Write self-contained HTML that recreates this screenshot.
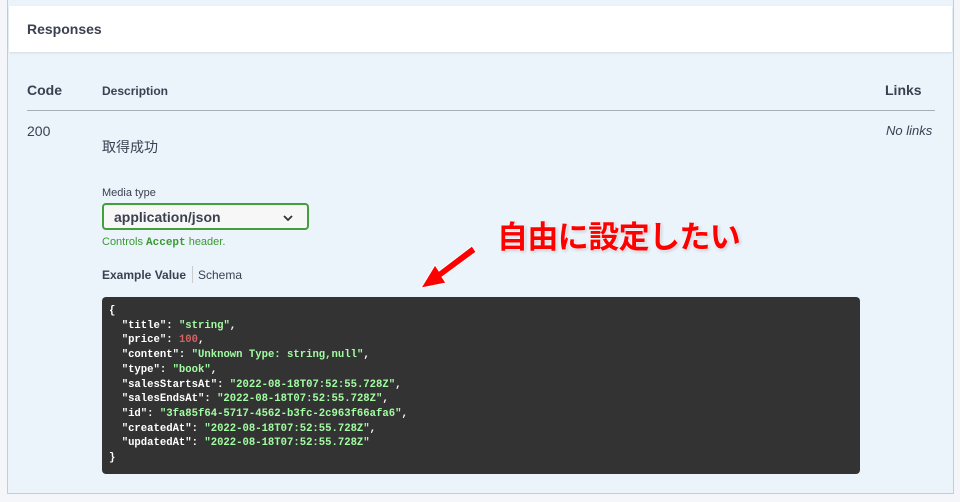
<!DOCTYPE html>
<html><head><meta charset="utf-8"><style>
*{margin:0;padding:0;box-sizing:border-box}
body{width:960px;height:502px;background:#f4f6f9;position:relative;overflow:hidden;font-family:"Liberation Sans","Noto Sans CJK JP",sans-serif;color:#3b4151}
.box{position:absolute;left:7px;top:0;width:947px;height:494px;background:#ebf3fb;border:1px solid #b4d0ee;border-top:none}
.hdr{position:absolute;left:9px;top:6px;width:943px;height:46px;background:#fff;box-shadow:0 1px 2px rgba(0,0,0,.1)}
.a{position:absolute;white-space:nowrap}
pre{position:absolute;left:102px;top:297px;width:758px;height:177px;background:#333;border-radius:4px;padding:7px 7px;font-family:"Liberation Mono",monospace;font-weight:bold;font-size:10.6px;line-height:14.7px;color:#fff}
.s{color:#a2fca2}.n{color:#d36363}
.big{font-size:31px;font-weight:bold;color:#f00;text-shadow:0 0 2px #fff,0 0 3px #fff,1px 1px 3px rgba(0,0,0,.3);letter-spacing:-0.6px;font-family:"Noto Sans CJK JP",sans-serif}
</style></head><body>
<div class="box"></div>
<div class="hdr"></div>
<div class="a" style="left:27px;top:21px;font-size:14px;font-weight:bold">Responses</div>
<div class="a" style="left:27px;top:82px;font-size:14px;font-weight:bold">Code</div>
<div class="a" style="left:102px;top:84px;font-size:12px;font-weight:bold">Description</div>
<div class="a" style="left:885px;top:82px;font-size:14px;font-weight:bold">Links</div>
<div class="a" style="left:27px;top:110px;width:908px;height:1px;background:#a9adb5"></div>
<div class="a" style="left:27px;top:123px;font-size:14px">200</div>
<div class="a" style="left:886px;top:123px;font-size:13px;font-style:italic">No links</div>
<div class="a" style="left:102px;top:137px;font-size:14px">取得成功</div>
<div class="a" style="left:102px;top:187px;font-size:11px">Media type</div>
<div class="a" style="left:102px;top:203px;width:207px;height:27px;border:2px solid #41a03a;border-radius:4px;background:#f7f7f7;font-size:14px;font-weight:bold;padding:4px 0 0 10px">application/json
<svg style="position:absolute;right:14px;top:10px" width="10" height="6" viewBox="0 0 10 6"><path d="M1 1l4 4 4-4" fill="none" stroke="#333" stroke-width="1.8"/></svg></div>
<div class="a" style="left:102px;top:236px;font-size:11px;color:#3a9a32">Controls <b style="font-family:'Liberation Mono',monospace">Accept</b> header.</div>
<div class="a" style="left:102px;top:268px;font-size:12px;font-weight:bold">Example Value</div>
<div class="a" style="left:192px;top:266px;width:1px;height:17px;background:#ccc"></div>
<div class="a" style="left:198px;top:268px;font-size:12px">Schema</div>
<pre>{
  "title": <span class="s">"string"</span>,
  "price": <span class="n">100</span>,
  "content": <span class="s">"Unknown Type: string,null"</span>,
  "type": <span class="s">"book"</span>,
  "salesStartsAt": <span class="s">"2022-08-18T07:52:55.728Z"</span>,
  "salesEndsAt": <span class="s">"2022-08-18T07:52:55.728Z"</span>,
  "id": <span class="s">"3fa85f64-5717-4562-b3fc-2c963f66afa6"</span>,
  "createdAt": <span class="s">"2022-08-18T07:52:55.728Z"</span>,
  "updatedAt": <span class="s">"2022-08-18T07:52:55.728Z"</span>
}</pre>
<svg class="a" style="left:415px;top:243px" width="65" height="52" viewBox="0 0 65 52"><path d="M57 3 L24 28 L20 22 L6 45 L31 40 L27 34 L61 9 Z" fill="#f00" stroke="#fff" stroke-width="1"/></svg>
<div class="a big" style="left:497px;top:212px">自由に設定したい</div>
</body></html>
